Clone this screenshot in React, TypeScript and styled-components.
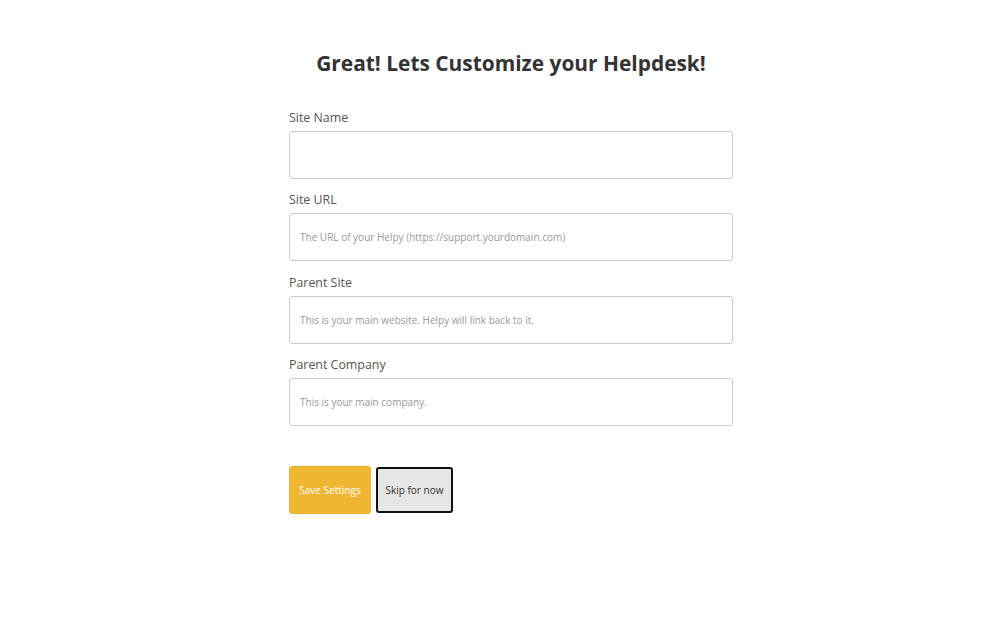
import React from "react";
import styled, { createGlobalStyle } from "styled-components";

const GlobalStyle = createGlobalStyle`
  html, body { margin: 0; padding: 0; background: #fff; }
  body { font-family: "Open Sans", "Noto Sans", sans-serif; }
  * { box-sizing: border-box; }
`;

const Page = styled.div`
  display: flex;
  justify-content: center;
  padding: 48px 0 0 15px;
`;

const Form = styled.form`
  width: 444px;
  display: flex;
  flex-direction: column;
`;

const Title = styled.h1`
  margin: 0 0 30px;
  font-size: 20.9px;
  line-height: 30px;
  font-weight: 700;
  color: #333;
  text-align: center;
`;

const Field = styled.div`
  display: flex;
  flex-direction: column;
  margin-bottom: 11.33px;
`;

const Label = styled.label`
  font-size: 12.4px;
  line-height: 18px;
  color: #555;
  padding-top: 1px;
  margin-bottom: 4px;
`;

const Input = styled.input`
  height: 48px;
  width: 100%;
  border: 1px solid #ccc;
  border-radius: 3px;
  padding: 0 10px;
  font-family: inherit;
  font-size: 10px;
  color: #555;
  background: #fff;
  outline: none;
  &::placeholder { color: #999; }
`;

const Actions = styled.div`
  display: flex;
  align-items: center;
  gap: 5px;
  margin-top: 28.5px;
`;

const Button = styled.button<{ $variant: "primary" | "secondary" }>`
  font-family: inherit;
  font-size: 10px;
  border-radius: 3px;
  cursor: pointer;
  ${(p) =>
    p.$variant === "primary"
      ? `
    width: 82px;
    height: 48px;
    padding: 0;
    background: #f0b732;
    border: 1px solid #ecb02a;
    color: #fff;
  `
      : `
    width: 77px;
    height: 46px;
    padding: 0;
    background: #e6e6e6;
    border: 2px solid #111;
    color: #333;
  `}
`;

const fields = [
  { label: "Site Name", placeholder: "" },
  { label: "Site URL", placeholder: "The URL of your Helpy (https://support.yourdomain.com)" },
  { label: "Parent Site", placeholder: "This is your main website. Helpy will link back to it." },
  { label: "Parent Company", placeholder: "This is your main company." },
];

export default function App() {
  return (
    <>
      <GlobalStyle />
      <Page>
        <Form onSubmit={(e) => e.preventDefault()}>
          <Title>Great! Lets Customize your Helpdesk!</Title>
          {fields.map((f) => (
            <Field key={f.label}>
              <Label>{f.label}</Label>
              <Input type="text" placeholder={f.placeholder} />
            </Field>
          ))}
          <Actions>
            <Button type="submit" $variant="primary">Save Settings</Button>
            <Button type="button" $variant="secondary">Skip for now</Button>
          </Actions>
        </Form>
      </Page>
    </>
  );
}
